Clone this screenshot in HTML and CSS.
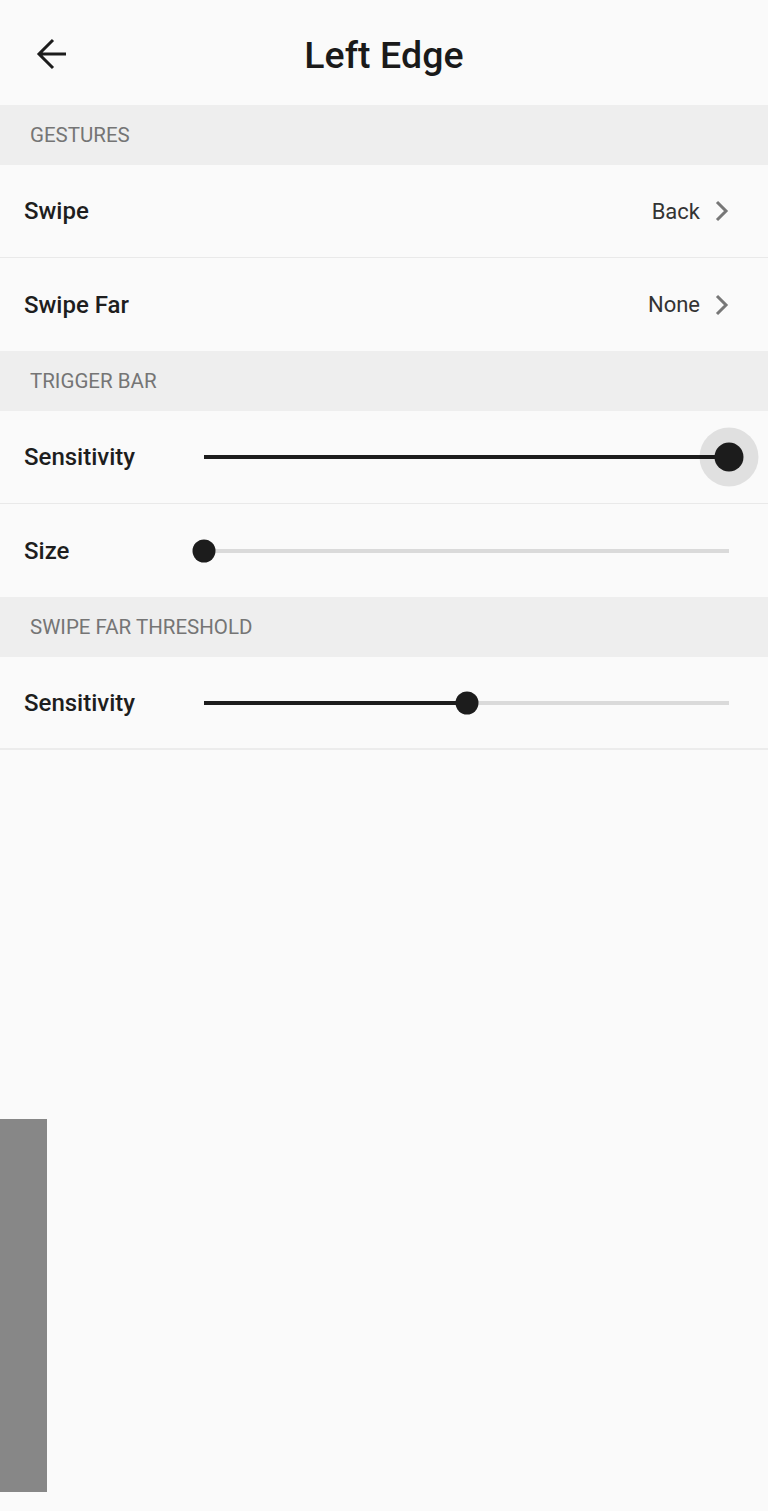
FILE: index.html
```html
<!DOCTYPE html>
<html lang="en">
<head>
<meta charset="utf-8">
<title>Left Edge</title>
<link rel="stylesheet" href="styles.css">
</head>
<body>
<header class="appbar">
  <button class="back" aria-label="Back">
    <svg viewBox="0 0 32 32" width="32" height="32"><path d="M30 16H3M17 2L3 16l14 14" fill="none" stroke="#1c1c1c" stroke-width="3" stroke-linecap="butt" stroke-linejoin="miter"/></svg>
  </button>
  <h1 class="title">Left Edge</h1>
  <span></span>
</header>

<section>
  <div class="section-head">GESTURES</div>
  <div class="row">
    <span class="label">Swipe</span>
    <span class="value">Back<svg class="chev" viewBox="0 0 16 22" width="16" height="22"><path d="M3 2l9 9-9 9" fill="none" stroke="#777" stroke-width="3"/></svg></span>
  </div>
  <div class="row">
    <span class="label">Swipe Far</span>
    <span class="value">None<svg class="chev" viewBox="0 0 16 22" width="16" height="22"><path d="M3 2l9 9-9 9" fill="none" stroke="#777" stroke-width="3"/></svg></span>
  </div>
</section>

<section>
  <div class="section-head">TRIGGER BAR</div>
  <div class="row slider-row">
    <span class="label">Sensitivity</span>
    <div class="slider">
      <div class="fill" style="width:100%"></div>
      <div class="thumb pressed" style="left:100%"></div>
    </div>
  </div>
  <div class="row slider-row">
    <span class="label">Size</span>
    <div class="slider">
      <div class="fill" style="width:0%"></div>
      <div class="thumb" style="left:0%"></div>
    </div>
  </div>
</section>

<section>
  <div class="section-head">SWIPE FAR THRESHOLD</div>
  <div class="row slider-row last">
    <span class="label">Sensitivity</span>
    <div class="slider">
      <div class="fill" style="width:50%"></div>
      <div class="thumb" style="left:50%"></div>
    </div>
  </div>
</section>

<div class="edge-bar"></div>
</body>
</html>
```

FILE: styles.css
```css
html, body {
  margin: 0;
  padding: 0;
  background: #fafafa;
  font-family: Roboto, "Noto Sans", "Liberation Sans", sans-serif;
}
body {
  width: 768px;
  min-height: 1511px;
  position: relative;
}
.appbar {
  height: 105px;
  display: grid;
  grid-template-columns: 1fr auto 1fr;
  align-items: center;
}
.back {
  justify-self: start;
  margin-left: 36px;
  margin-top: 2px;
  padding: 0;
  border: 0;
  background: none;
  width: 32px;
  height: 32px;
  display: flex;
}
.title {
  margin: 4px 0 0;
  font-size: 37.5px;
  font-weight: 500;
  color: #1a1a1a;
  letter-spacing: 0.1px;
}
.section-head {
  height: 60px;
  box-sizing: border-box;
  background: #eeeeee;
  color: #757575;
  font-size: 20.5px;
  display: flex;
  align-items: center;
  padding-left: 30px;
}
.row {
  height: 93px;
  box-sizing: border-box;
  display: flex;
  align-items: center;
  justify-content: space-between;
  padding: 0 38px 0 24px;
  border-bottom: 1px solid #e9e9e9;
}
.row:last-child {
  border-bottom: 0;
}
.row.last {
  border-bottom: 2px solid #ececec;
}
.label {
  font-size: 24px;
  font-weight: 500;
  color: #1e1e1e;
}
.value {
  display: flex;
  align-items: center;
  gap: 14px;
  font-size: 22px;
  color: #333333;
}
.chev {
  display: block;
}
.slider-row {
  justify-content: flex-start;
  padding-right: 39px;
}
.slider-row .label {
  width: 180px;
  flex: none;
}
.slider {
  position: relative;
  flex: 1;
  height: 4px;
  background: #dadada;
}
.fill {
  height: 100%;
  background: #1c1c1c;
}
.thumb {
  position: absolute;
  top: 50%;
  width: 23px;
  height: 23px;
  border-radius: 50%;
  background: #1c1c1c;
  transform: translate(-50%, -50%);
}
.thumb.pressed {
  width: 29px;
  height: 29px;
  box-shadow: 0 0 0 15px rgba(0, 0, 0, 0.1);
}
.edge-bar {
  position: absolute;
  left: 0;
  top: 1119px;
  width: 47px;
  height: 373px;
  background: #878787;
}
```
